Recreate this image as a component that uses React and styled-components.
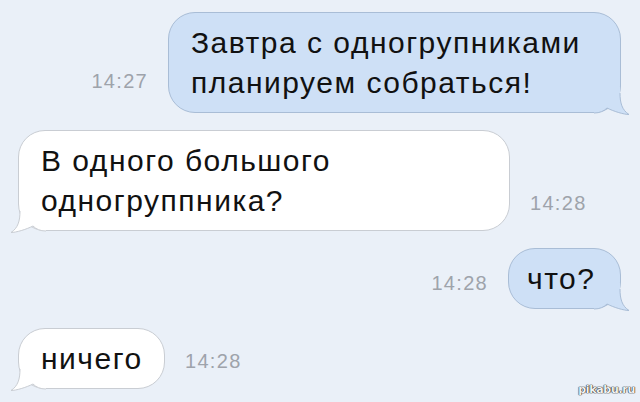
import React from 'react'
import styled, { createGlobalStyle } from 'styled-components'

const GlobalStyle = createGlobalStyle`
  html, body {
    margin: 0;
    padding: 0;
    background: #eaf0f8;
  }
`

const Page = styled.div`
  position: relative;
  width: 640px;
  height: 402px;
  box-sizing: border-box;
  padding: 12px 19px 0 18px;
  background: #eaf0f8;
  display: flex;
  flex-direction: column;
  gap: 17px;
  overflow: hidden;
  font-family: "Liberation Sans", Arial, sans-serif;
`

const Row = styled.div`
  display: flex;
  align-items: flex-end;
  justify-content: ${({ $side }) => ($side === 'right' ? 'flex-end' : 'flex-start')};
  gap: 20px;
  margin-top: ${({ $mt }) => $mt || 0}px;
`

const Bubble = styled.div`
  position: relative;
  box-sizing: border-box;
  width: ${({ $w }) => $w}px;
  padding: 10px 12px 9px ${({ $pl }) => $pl}px;
  border-radius: 27px;
  font-size: 30px;
  line-height: 40px;
  letter-spacing: 1.5px;
  white-space: nowrap;
  color: #111;
  background: ${({ $side }) => ($side === 'right' ? '#cee0f6' : '#ffffff')};
  border: 1px solid ${({ $side }) => ($side === 'right' ? '#a9bdd6' : '#c9cdd3')};
`

const Line = styled.div`
  position: relative;
  z-index: 1;
`

const Time = styled.div`
  font-size: 20px;
  line-height: 20px;
  letter-spacing: 1.3px;
  color: #9ea3ab;
  margin-bottom: ${({ $lift }) => $lift}px;
`

const TailSvg = styled.svg`
  position: absolute;
  bottom: -2.5px;
  ${({ $side }) => ($side === 'right' ? 'right: -9.5px;' : 'left: -9.5px;')}
  overflow: visible;
`

const Watermark = styled.div`
  position: absolute;
  right: 5px;
  bottom: 6px;
  font-family: "DejaVu Sans", sans-serif;
  font-size: 11px;
  font-weight: bold;
  letter-spacing: -0.3px;
  color: #f2f2f2;
  text-shadow: 0 0 1px #222, 0 0 1px #222, 0 0 1px #222;
`

const Tail = ({ side }) => {
  const fill = side === 'right' ? '#cee0f6' : '#ffffff'
  const stroke = side === 'right' ? '#a9bdd6' : '#c9cdd3'
  const edge = 'M26 6 C26 16 28 23 35 27.5 C30 27.5 20 24.5 13 21 C10 24 6 26 0 26'
  return (
    <TailSvg $side={side} width="36" height="28" viewBox="0 0 36 28">
      <g transform={side === 'left' ? 'translate(36 0) scale(-1 1)' : undefined}>
        <path d={edge + ' L0 0 L26 0 Z'} fill={fill} />
        <path d={edge} fill="none" stroke={stroke} strokeWidth="1" />
      </g>
    </TailSvg>
  )
}

const messages = [
  { side: 'right', w: 453, pl: 22, time: '14:27', lift: 22, lines: ['Завтра с одногрупниками', 'планируем собраться!'] },
  { side: 'left', w: 492, pl: 22, time: '14:28', lift: 18, lines: ['В одного большого', 'одногруппника?'] },
  { side: 'right', w: 113, pl: 18, time: '14:28', lift: 16, lines: ['что?'] },
  { side: 'left', w: 147, pl: 22, time: '14:28', lift: 18, mt: 2, lines: ['ничего'] },
]

const App = () => {
  return (
    <>
      <GlobalStyle />
      <Page>
        {messages.map((m, i) => {
          const bubble = (
            <Bubble key="b" $side={m.side} $w={m.w} $pl={m.pl}>
              <Tail side={m.side} />
              {m.lines.map((l, j) => (
                <Line key={j}>{l}</Line>
              ))}
            </Bubble>
          )
          const time = (
            <Time key="t" $lift={m.lift}>
              {m.time}
            </Time>
          )
          return (
            <Row key={i} $side={m.side} $mt={m.mt}>
              {m.side === 'right' ? [time, bubble] : [bubble, time]}
            </Row>
          )
        })}
        <Watermark>pikabu.ru</Watermark>
      </Page>
    </>
  )
}

export default App
